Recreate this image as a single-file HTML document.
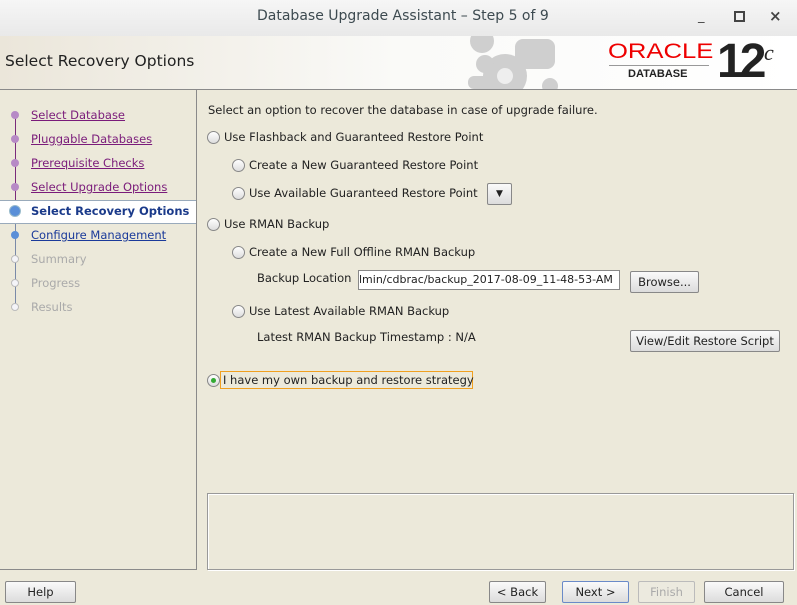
<!DOCTYPE html><html><head><style>
body{margin:0;width:797px;height:605px;background:#ece9da;font-family:"DejaVu Sans","Liberation Sans",sans-serif;font-size:11.5px;color:#222;position:relative;overflow:hidden}
.a{position:absolute;white-space:nowrap}
.tb{position:absolute;left:0;top:0;width:797px;height:36px;background:linear-gradient(#f6f6f6,#e9e9e9);border-bottom:1px solid #cfcfcf}
.hd{position:absolute;left:0;top:36px;width:797px;height:53px;background:linear-gradient(90deg,#ebe6da,#fafaf8 50%,#fff);border-bottom:1px solid #8a8a8a}
.lp{position:absolute;left:0;top:90px;width:196px;height:479px;border-right:1px solid #8a8a8a;border-bottom:1px solid #8a8a8a}
.dot{position:absolute;left:11px;width:8px;height:8px;border-radius:50%}
.nav{position:absolute;left:31px;text-decoration:underline;color:#7a1b7a}
.r{position:absolute;width:11px;height:11px;border:1px solid #888;border-radius:50%;background:linear-gradient(#fff,#ddd)}
.btn{position:absolute;height:20px;border:1px solid #888;border-radius:2px;background:linear-gradient(#fafafa,#dcdcdc);text-align:center;line-height:20px}
</style></head><body>
<div class="tb"></div>
<div class="a" style="left:257px;top:8px;font-size:14px;color:#3d4a50">Database Upgrade Assistant – Step 5 of 9</div>
<div class="a" style="left:698px;top:9px;font-size:13px;color:#444">_</div>
<div class="a" style="left:734px;top:11px;width:7px;height:7px;border:2px solid #444"></div>
<div class="a" style="left:769px;top:7px;font-size:15px;font-weight:bold;color:#444">×</div>
<div class="hd"></div>
<svg class="a" style="left:460px;top:36px" width="130" height="53"><g fill="#cfcfcf"><circle cx="45" cy="40" r="22"/><circle cx="25" cy="28" r="9"/><circle cx="22" cy="5" r="12"/><rect x="8" y="40" width="40" height="13" rx="6"/><rect x="55" y="3" width="40" height="30" rx="8"/><circle cx="90" cy="50" r="8"/></g><circle cx="45" cy="40" r="8" fill="#eee"/></svg>
<div class="a" style="left:608px;top:40px;font-size:21px;color:#e00;font-family:'Liberation Sans';transform:scaleX(1.22);transform-origin:left">ORACLE</div>
<div class="a" style="left:609px;top:65px;width:100px;border-top:1px solid #999"></div>
<div class="a" style="left:628px;top:68px;font-size:11px;font-weight:bold;font-family:'Liberation Sans'">DATABASE</div>
<div class="a" style="left:717px;top:34px;font-size:48px;font-weight:bold;font-family:'Liberation Sans';letter-spacing:-4px">12</div>
<div class="a" style="left:764px;top:40px;font-size:22px;font-style:italic;font-family:'Liberation Serif'">c</div>
<div class="a" style="left:5px;top:52px;font-size:15.5px;color:#222">Select Recovery Options</div>
<div class="lp"></div>
<div class="a" style="left:15px;top:118px;width:1px;height:93px;background:#7a2b7a"></div>
<div class="a" style="left:15px;top:213px;width:1px;height:96px;background:#7a8aa8"></div>
<div class="a" style="left:0;top:200px;width:196px;height:22px;background:#fff;border-top:1px solid #9ab;border-bottom:1px solid #9ab"></div>
<div class="dot" style="top:111px;background:#b78ac6"></div>
<div class="dot" style="top:135px;background:#b78ac6"></div>
<div class="dot" style="top:159px;background:#b78ac6"></div>
<div class="dot" style="top:183px;background:#b78ac6"></div>
<div class="a" style="left:9px;top:205px;width:10px;height:10px;border-radius:50%;background:#5a8fd8;border:1px solid #9bc"></div>
<div class="dot" style="top:231px;background:#5a8fd8"></div>
<div class="dot" style="top:255px;background:#f4f4f8;border:1px solid #bbb;width:6px;height:6px"></div>
<div class="dot" style="top:279px;background:#f4f4f8;border:1px solid #bbb;width:6px;height:6px"></div>
<div class="dot" style="top:303px;background:#f4f4f8;border:1px solid #bbb;width:6px;height:6px"></div>
<div class="nav" style="top:108px">Select Database</div>
<div class="nav" style="top:132px">Pluggable Databases</div>
<div class="nav" style="top:156px">Prerequisite Checks</div>
<div class="nav" style="top:180px">Select Upgrade Options</div>
<div class="a" style="left:31px;top:204px;font-weight:bold;color:#1a3a8a">Select Recovery Options</div>
<div class="nav" style="top:228px;color:#1a3a9a">Configure Management</div>
<div class="a" style="left:31px;top:252px;color:#aaa">Summary</div>
<div class="a" style="left:31px;top:276px;color:#aaa">Progress</div>
<div class="a" style="left:31px;top:300px;color:#aaa">Results</div>
<div class="a" style="left:208px;top:103px">Select an option to recover the database in case of upgrade failure.</div>
<div class="r" style="left:207px;top:131px"></div><div class="a" style="left:224px;top:130px">Use Flashback and Guaranteed Restore Point</div>
<div class="r" style="left:232px;top:159px"></div><div class="a" style="left:249px;top:158px">Create a New Guaranteed Restore Point</div>
<div class="r" style="left:232px;top:187px"></div><div class="a" style="left:249px;top:186px">Use Available Guaranteed Restore Point</div>
<div class="btn" style="left:487px;top:183px;width:23px;height:20px;font-size:9px">▼</div>
<div class="r" style="left:207px;top:218px"></div><div class="a" style="left:224px;top:217px">Use RMAN Backup</div>
<div class="r" style="left:232px;top:246px"></div><div class="a" style="left:249px;top:245px">Create a New Full Offline RMAN Backup</div>
<div class="a" style="left:257px;top:271px">Backup Location</div>
<div class="a" style="left:358px;top:270px;width:260px;height:18px;background:#fff;border:1px solid #888;line-height:18px;overflow:hidden;font-size:11px">lmin/cdbrac/backup_2017-08-09_11-48-53-AM</div>
<div class="btn" style="left:630px;top:271px;width:67px">Browse...</div>
<div class="r" style="left:232px;top:305px"></div><div class="a" style="left:249px;top:304px">Use Latest Available RMAN Backup</div>
<div class="a" style="left:257px;top:330px">Latest RMAN Backup Timestamp : N/A</div>
<div class="btn" style="left:630px;top:330px;width:148px">View/Edit Restore Script</div>
<div class="r" style="left:207px;top:374px"></div><div class="a" style="left:211px;top:378px;width:5px;height:5px;border-radius:50%;background:#3a3"></div>
<div class="a" style="left:220px;top:371px;width:251px;height:16px;border:1px solid #f0a020"></div>
<div class="a" style="left:223px;top:373px">I have my own backup and restore strategy</div>
<div class="a" style="left:207px;top:493px;width:585px;height:75px;border:1px solid #999;box-shadow:inset 1px 1px 0 #fff,1px 1px 0 #fff"></div>
<div class="btn" style="left:5px;top:581px;width:69px">Help</div>
<div class="btn" style="left:489px;top:581px;width:55px">&lt; Back</div>
<div class="btn" style="left:562px;top:581px;width:65px;border-color:#6a8ac8">Next &gt;</div>
<div class="btn" style="left:638px;top:581px;width:55px;color:#aaa;border-color:#bbb;background:#eceadf">Finish</div>
<div class="btn" style="left:704px;top:581px;width:78px">Cancel</div>
</body></html>
